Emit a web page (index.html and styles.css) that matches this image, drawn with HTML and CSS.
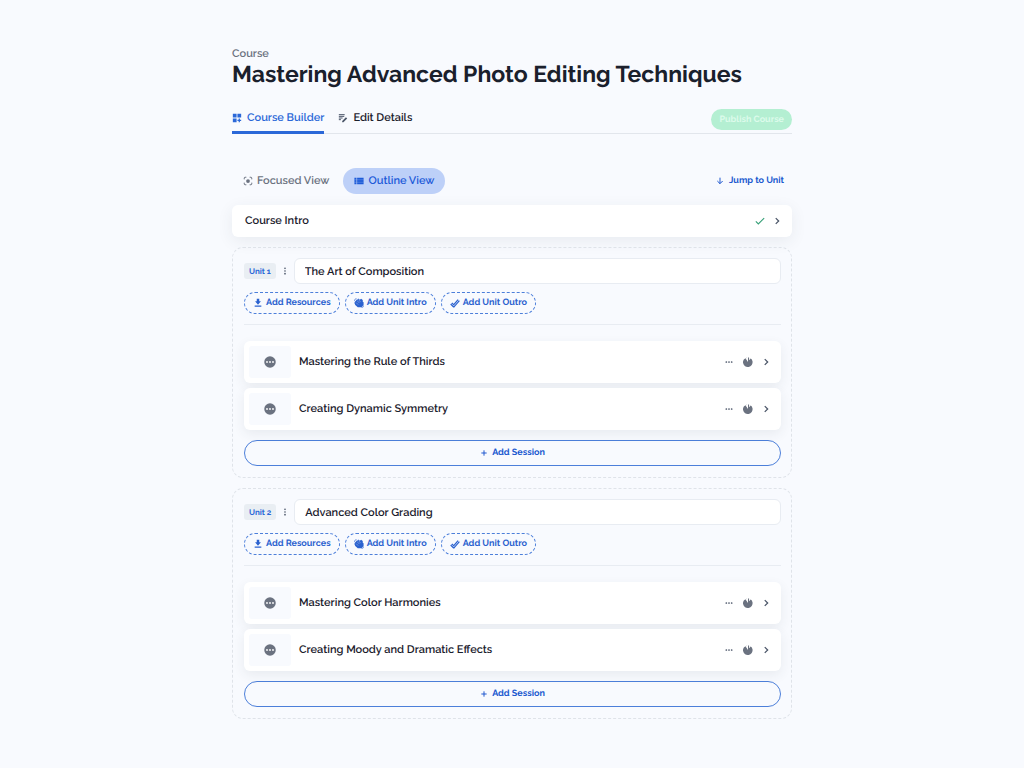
FILE: index.html
```html
<!DOCTYPE html>
<html lang="en">
<head>
<meta charset="utf-8">
<meta name="viewport" content="width=device-width, initial-scale=1">
<title>Course Builder</title>
<link rel="stylesheet" href="styles.css">
</head>
<body>
<svg class="sprite" aria-hidden="true">
  <symbol id="builder" viewBox="0 0 24 24"><path fill="currentColor" d="M2 2h9v9H2zM13 2h9v9h-9zM2 13h9v9H2zM16 13h3v3h3v3h-3v3h-3v-3h-3v-3h3z"/></symbol>
  <symbol id="edit" viewBox="0 0 24 24"><path fill="none" stroke="currentColor" stroke-width="2.4" d="M2 4h14M2 8h13M2 12h9M2 16h5"/><path fill="currentColor" d="M10 22v-3l9-9 3 3-9 9z"/></symbol>
  <symbol id="focus" viewBox="0 0 24 24"><path fill="none" stroke="currentColor" stroke-width="2.4" d="M3 8V5a2 2 0 0 1 2-2h3M16 3h3a2 2 0 0 1 2 2v3M21 16v3a2 2 0 0 1-2 2h-3M8 21H5a2 2 0 0 1-2-2v-3"/><circle cx="12" cy="12" r="4.500" fill="currentColor"/></symbol>
  <symbol id="outline" viewBox="0 0 24 24"><path fill="currentColor" d="M1 4h5v16H1zM7.500 4H23v16H7.500z"/><path stroke="#bdd0f8" stroke-width=".7" d="M1 9h22M1 15h22"/></symbol>
  <symbol id="down" viewBox="0 0 24 24"><path fill="none" stroke="currentColor" stroke-width="3" d="M12 2v18M4 12l8 8 8-8"/></symbol>
  <symbol id="check" viewBox="0 0 24 24"><path fill="none" stroke="currentColor" stroke-width="2.800" d="M2 13l6 6L22 5"/></symbol>
  <symbol id="chevron" viewBox="0 0 24 24"><path fill="none" stroke="currentColor" stroke-width="3" d="M9 5l7 7-7 7"/></symbol>
  <symbol id="kebab" viewBox="0 0 24 24"><g fill="currentColor"><circle cx="12" cy="4" r="2.500"/><circle cx="12" cy="12" r="2.500"/><circle cx="12" cy="20" r="2.500"/></g></symbol>
  <symbol id="more" viewBox="0 0 24 24"><g fill="currentColor"><circle cx="4" cy="12" r="2.600"/><circle cx="12" cy="12" r="2.600"/><circle cx="20" cy="12" r="2.600"/></g></symbol>
  <symbol id="resource" viewBox="0 0 24 24"><path fill="currentColor" d="M9 2h6v6h4l-7 8-7-8h4zM4 18h16v3H4z"/></symbol>
  <symbol id="wave" viewBox="0 0 24 24"><path fill="currentColor" d="M2 9l3-3 0-2 3 0 2-3 4 3 3-2 4 3v4l2 1v7l-5 5H9l-6-5-2-5z"/><path fill="none" stroke="currentColor" stroke-width="1.500" d="M1 7q0-5 5-6M23 18q0 5-5 5"/><path stroke="#f8faff" stroke-width=".8" d="M7 6l6 6M11 4l5 6M5 11l5 5"/></symbol>
  <symbol id="outro" viewBox="0 0 24 24"><path fill="none" stroke="currentColor" stroke-width="7" stroke-linejoin="round" d="M3 13l6 6L21 5"/><path fill="none" stroke="#f8faff" stroke-width="1.500" d="M3 13l6 6L21 5"/></symbol>
  <symbol id="plus" viewBox="0 0 24 24"><path stroke="currentColor" stroke-width="3" d="M12 4v16M4 12h16"/></symbol>
  <symbol id="chat" viewBox="0 0 24 24"><circle cx="12" cy="12" r="11.500" fill="currentColor"/><g fill="#fff"><circle cx="6" cy="12" r="1.800"/><circle cx="12" cy="12" r="1.800"/><circle cx="18" cy="12" r="1.800"/></g></symbol>
  <symbol id="progress" viewBox="0 0 24 24"><path fill="currentColor" d="M12 12V6L8 3l1-2h6v7l3-5A11.500 11.500 0 1 1 2 6l4-3z"/><path fill="#fff" d="M10 0h2v9l-5-6zM15 0h2l1 4-3 3z"/></symbol>
</svg>

<main class="page">
  <header>
    <p class="eyebrow">Course</p>
    <h1 class="title">Mastering Advanced Photo Editing Techniques</h1>
    <div class="tabbar">
      <nav class="tabs">
        <a class="tab tab-active" href="#builder-view"><svg class="icon"><use href="#builder"/></svg>Course Builder</a>
        <a class="tab" href="#details"><svg class="icon"><use href="#edit"/></svg>Edit Details</a>
      </nav>
      <button class="publish" type="button" disabled>Publish Course</button>
    </div>
  </header>

  <div class="toolbar">
    <button class="view" type="button"><svg class="icon"><use href="#focus"/></svg>Focused View</button>
    <button class="view view-active" type="button" aria-pressed="true"><svg class="icon"><use href="#outline"/></svg>Outline View</button>
    <button class="jump" type="button"><svg class="icon icon-small"><use href="#down"/></svg>Jump to Unit</button>
  </div>

  <a class="intro" href="#intro">Course Intro
    <span class="intro-state"><svg class="icon check"><use href="#check"/></svg><svg class="icon"><use href="#chevron"/></svg></span>
  </a>

  <section class="unit">
    <div class="unit-head">
      <label class="badge" for="unit1">Unit 1</label>
      <button class="bare" type="button" aria-label="Unit 1 options"><svg class="icon icon-small"><use href="#kebab"/></svg></button>
      <input class="unit-name" id="unit1" type="text" value="The Art of Composition">
    </div>
    <div class="chips">
      <button class="chip" type="button"><svg class="icon"><use href="#resource"/></svg>Add Resources</button>
      <button class="chip" type="button"><svg class="icon"><use href="#wave"/></svg>Add Unit Intro</button>
      <button class="chip" type="button"><svg class="icon"><use href="#outro"/></svg>Add Unit Outro</button>
    </div>
    <ul class="sessions">
      <li class="session"><span class="thumb"><svg class="icon icon-large"><use href="#chat"/></svg></span><span class="session-name">Mastering the Rule of Thirds</span>
        <span class="actions"><button class="bare" type="button" aria-label="Session options"><svg class="icon icon-small"><use href="#more"/></svg></button><svg class="icon"><use href="#progress"/></svg><button class="bare" type="button" aria-label="Open session"><svg class="icon"><use href="#chevron"/></svg></button></span></li>
      <li class="session"><span class="thumb"><svg class="icon icon-large"><use href="#chat"/></svg></span><span class="session-name">Creating Dynamic Symmetry</span>
        <span class="actions"><button class="bare" type="button" aria-label="Session options"><svg class="icon icon-small"><use href="#more"/></svg></button><svg class="icon"><use href="#progress"/></svg><button class="bare" type="button" aria-label="Open session"><svg class="icon"><use href="#chevron"/></svg></button></span></li>
    </ul>
    <button class="add" type="button"><svg class="icon icon-small"><use href="#plus"/></svg>Add Session</button>
  </section>

  <section class="unit">
    <div class="unit-head">
      <label class="badge" for="unit2">Unit 2</label>
      <button class="bare" type="button" aria-label="Unit 2 options"><svg class="icon icon-small"><use href="#kebab"/></svg></button>
      <input class="unit-name" id="unit2" type="text" value="Advanced Color Grading">
    </div>
    <div class="chips">
      <button class="chip" type="button"><svg class="icon"><use href="#resource"/></svg>Add Resources</button>
      <button class="chip" type="button"><svg class="icon"><use href="#wave"/></svg>Add Unit Intro</button>
      <button class="chip" type="button"><svg class="icon"><use href="#outro"/></svg>Add Unit Outro</button>
    </div>
    <ul class="sessions">
      <li class="session"><span class="thumb"><svg class="icon icon-large"><use href="#chat"/></svg></span><span class="session-name">Mastering Color Harmonies</span>
        <span class="actions"><button class="bare" type="button" aria-label="Session options"><svg class="icon icon-small"><use href="#more"/></svg></button><svg class="icon"><use href="#progress"/></svg><button class="bare" type="button" aria-label="Open session"><svg class="icon"><use href="#chevron"/></svg></button></span></li>
      <li class="session"><span class="thumb"><svg class="icon icon-large"><use href="#chat"/></svg></span><span class="session-name">Creating Moody and Dramatic Effects</span>
        <span class="actions"><button class="bare" type="button" aria-label="Session options"><svg class="icon icon-small"><use href="#more"/></svg></button><svg class="icon"><use href="#progress"/></svg><button class="bare" type="button" aria-label="Open session"><svg class="icon"><use href="#chevron"/></svg></button></span></li>
    </ul>
    <button class="add" type="button"><svg class="icon icon-small"><use href="#plus"/></svg>Add Session</button>
  </section>
</main>
</body>
</html>
```

FILE: styles.css
```css
* { box-sizing: border-box; }

body {
  margin: 0;
  background: #f8fafe;
  color: #1a202c;
  font: 600 11px/16px Raleway, Lato, sans-serif;
  text-rendering: geometricPrecision;
}

button, input { font: inherit; color: inherit; margin: 0; text-rendering: inherit; }
button { background: none; border: 0; padding: 0; white-space: nowrap; cursor: pointer; }
a { color: inherit; text-decoration: none; }

.sprite { display: none; }
.icon { width: 10px; height: 10px; flex: none; display: block; }
.icon-small { width: 8px; height: 8px; }
.icon-large { width: 12px; height: 12px; }

.page { max-width: 560px; margin: 0 auto; padding: 46px 0 48px; }

.eyebrow { margin: 0; color: #6b7280; }
.title { margin: 0; font-size: 23px; line-height: 25px; font-weight: 700; }

.tabbar {
  display: flex;
  justify-content: space-between;
  align-items: flex-start;
  margin-top: 22px;
  border-bottom: 1px solid #e2e6ec;
}
.tabs { display: flex; gap: 14px; }
.tab {
  display: flex;
  align-items: center;
  gap: 5px;
  height: 25px;
  padding-bottom: 4px;
  margin-bottom: -1px;
  border-bottom: 3px solid transparent;
}
.tab .icon { color: #4a5568; }
.tab-active, .tab-active .icon { color: #2b68d8; }
.tab-active { border-color: #2b68d8; }
.publish {
  height: 21px;
  padding: 1px 8px 0;
  border-radius: 11px;
  background: #b4efd2;
  color: #dcfbeb;
  font-size: 9px;
  font-weight: 700;
}

.toolbar { display: flex; align-items: center; margin-top: 34px; }
.view {
  display: flex;
  align-items: center;
  gap: 4px;
  height: 26px;
  padding: 0 10px 0 11px;
  border-radius: 13px;
  color: #6b7280;
}
.view-active { background: #bdd0f8; color: #1d5bd8; margin-left: 4px; }
.jump {
  display: flex;
  align-items: center;
  gap: 5px;
  margin-left: auto;
  padding-right: 8px;
  color: #2059cf;
  font-size: 9px;
  font-weight: 700;
}

.intro {
  display: flex;
  align-items: center;
  justify-content: space-between;
  height: 32px;
  margin-top: 11px;
  padding: 0 10px 0 13px;
  border-radius: 6px;
  background: #fff;
  box-shadow: 0 4px 16px rgba(45, 70, 80, .08);
}
.intro-state { display: flex; gap: 7px; color: #4a5568; }
.check { color: #38a078; }

.unit {
  margin-top: 10px;
  padding: 10px 10px 11px 11px;
  border: 1px dashed #dfe3e9;
  border-radius: 11px;
}
.unit-head { display: flex; align-items: center; }
.badge {
  padding: 0 5px;
  border-radius: 3px;
  background: #e9eef3;
  color: #2b68d8;
  font-size: 8px;
  font-weight: 700;
}
.bare { color: #4a5568; }
.unit-head .bare { margin: 0 5px; }
.unit-name {
  flex: 1;
  min-width: 0;
  height: 26px;
  padding: 0 10px;
  border: 1px solid #e8ecf2;
  border-radius: 6px;
  background: #fff;
}

.chips { display: flex; flex-wrap: wrap; gap: 5px; padding: 8px 0 10px; border-bottom: 1px solid #e8ecf2; }
.chip {
  display: flex;
  align-items: center;
  gap: 3px;
  height: 22px;
  padding: 0 8px;
  border: 1px dashed #4c7fda;
  border-radius: 11px;
  color: #2b62cf;
  font-size: 9px;
  font-weight: 700;
}

.sessions { list-style: none; margin: 16px 0 10px; padding: 0; display: grid; gap: 5px; }
.session {
  display: flex;
  align-items: center;
  gap: 8px;
  padding: 5px 10px 5px 5px;
  border-radius: 6px;
  background: #fff;
  box-shadow: 0 4px 12px rgba(45, 70, 80, .08);
}
.thumb {
  display: grid;
  place-items: center;
  width: 42px;
  height: 32px;
  border-radius: 3px;
  background: #f8fafe;
  color: #6b7280;
}
.session-name { flex: 1; }
.actions { display: flex; align-items: center; gap: 8px; color: #6b7280; }
.actions .bare:first-child { margin-right: 2px; }

.add {
  display: flex;
  align-items: center;
  justify-content: center;
  gap: 4px;
  width: 100%;
  height: 26px;
  border: 1px solid #4c7fda;
  border-radius: 13px;
  color: #2059cf;
  font-size: 9px;
  font-weight: 700;
}
```
